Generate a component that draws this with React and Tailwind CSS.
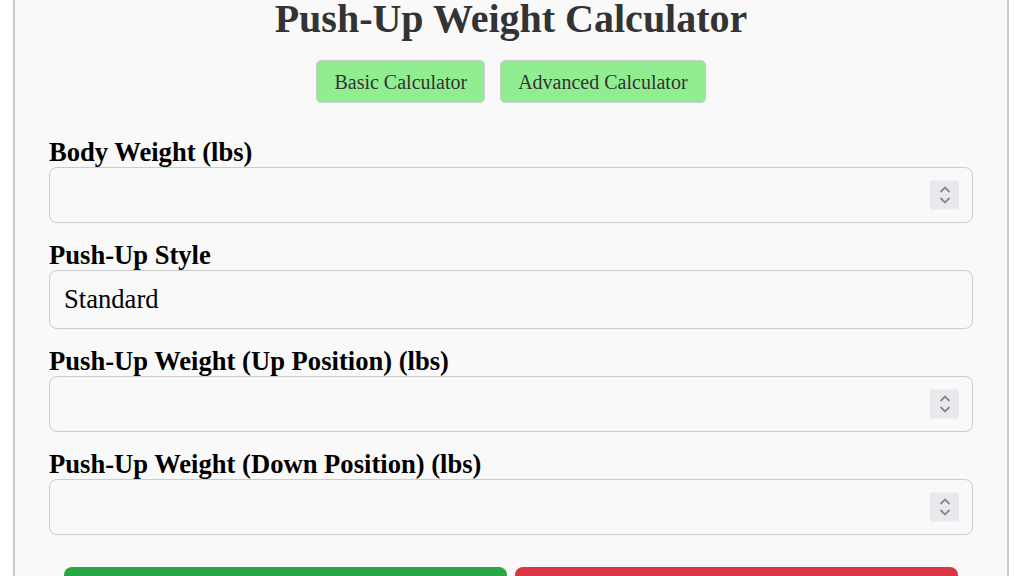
import { useState } from 'react';

const serif = { fontFamily: '"Liberation Serif", "Times New Roman", serif' };

function Spinner() {
    return (
        <div className="absolute right-[14px] top-1/2 -translate-y-1/2 w-[29px] h-[29px] bg-[#e9e9ed] flex flex-col items-center justify-center gap-[3px]">
            <svg width="12" height="8" viewBox="0 0 12 8" fill="none" stroke="#8a8a8a" strokeWidth="1.8">
                <path d="M1.5 6.5 L6 2 L10.5 6.5" />
            </svg>
            <svg width="12" height="8" viewBox="0 0 12 8" fill="none" stroke="#8a8a8a" strokeWidth="1.8">
                <path d="M1.5 1.5 L6 6 L10.5 1.5" />
            </svg>
        </div>
    );
}

function NumberField({ label, value, onChange }) {
    return (
        <div className="flex flex-col">
            <label className="text-[26.6px] font-bold text-black leading-[30px]">{label}</label>
            <div className="relative">
                <input
                    type="text"
                    inputMode="decimal"
                    value={value}
                    onChange={(e) => onChange(e.target.value)}
                    className="w-full h-[56px] px-[14px] text-[26px] bg-[#f9f9f9] border border-[#cccccc] rounded-[8px] outline-none"
                    style={serif}
                />
                <Spinner />
            </div>
        </div>
    );
}

export default function App() {
    const [bodyWeight, setBodyWeight] = useState('');
    const [style, setStyle] = useState('Standard');
    const [upWeight, setUpWeight] = useState('');
    const [downWeight, setDownWeight] = useState('');

    return (
        <div className="min-h-screen bg-white" style={serif}>
            <div className="ml-[13px] w-[996px] border-x-2 border-[#cccccc] bg-[#f9f9f9] px-[34px] pb-[40px]">
                <h1 className="text-center text-[40px] font-bold text-[#333333] leading-[38px]">
                    Push-Up Weight Calculator
                </h1>

                {/* Mode tabs */}
                <div className="flex justify-center gap-[15px] mt-[22px]">
                    <button className="h-[43px] px-[17px] bg-[#90ee90] border border-[#cccccc] rounded-[5px] text-[20px] text-[#333333]">
                        Basic Calculator
                    </button>
                    <button className="h-[43px] px-[17px] bg-[#90ee90] border border-[#cccccc] rounded-[5px] text-[20px] text-[#333333]">
                        Advanced Calculator
                    </button>
                </div>

                <div className="flex flex-col gap-[17px] mt-[34px]">
                    <NumberField label="Body Weight (lbs)" value={bodyWeight} onChange={setBodyWeight} />

                    <div className="flex flex-col">
                        <label className="text-[26.6px] font-bold text-black leading-[30px]">Push-Up Style</label>
                        <select
                            value={style}
                            onChange={(e) => setStyle(e.target.value)}
                            className="w-full h-[59px] px-[14px] text-[26.6px] bg-[#f9f9f9] border border-[#cccccc] rounded-[8px] appearance-none outline-none text-black"
                            style={serif}
                        >
                            <option>Standard</option>
                            <option>Incline</option>
                            <option>Decline</option>
                            <option>Knee</option>
                        </select>
                    </div>

                    <NumberField label="Push-Up Weight (Up Position) (lbs)" value={upWeight} onChange={setUpWeight} />
                    <NumberField label="Push-Up Weight (Down Position) (lbs)" value={downWeight} onChange={setDownWeight} />
                </div>

                <div className="flex gap-[8px] px-[15px] mt-[32px]">
                    <button className="flex-1 h-[50px] bg-[#28a745] text-white text-[22px] rounded-[8px]">Calculate</button>
                    <button className="flex-1 h-[50px] bg-[#dc3545] text-white text-[22px] rounded-[8px]">Reset</button>
                </div>
            </div>
        </div>
    );
}
